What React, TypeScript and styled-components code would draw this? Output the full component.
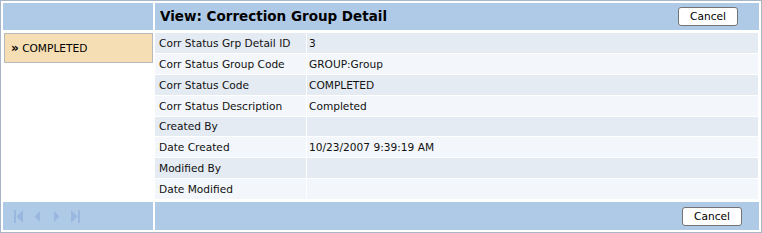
import React from 'react';
import styled, { createGlobalStyle } from 'styled-components';

const GlobalStyle = createGlobalStyle`
  html, body {
    margin: 0;
    padding: 0;
    background: #ffffff;
  }
  body {
    font-family: 'DejaVu Sans', Verdana, sans-serif;
    font-size: 10.6px;
    color: #000000;
  }
`;

const rows: [string, string][] = [
  ['Corr Status Grp Detail ID', '3'],
  ['Corr Status Group Code', 'GROUP:Group'],
  ['Corr Status Code', 'COMPLETED'],
  ['Corr Status Description', 'Completed'],
  ['Created By', ''],
  ['Date Created', '10/23/2007 9:39:19 AM'],
  ['Modified By', ''],
  ['Date Modified', ''],
];

const NavIcon: React.FC<{ kind: 'first' | 'prev' | 'next' | 'last' }> = ({ kind }) => {
  const fill = '#9ab8df';
  return (
    <svg width="10" height="13" viewBox="0 0 10 13">
      {kind === 'first' && (
        <>
          <rect x="0" y="0" width="2" height="13" fill={fill} />
          <path d="M9 0 L2.5 6.5 L9 13 Z" fill={fill} />
        </>
      )}
      {kind === 'prev' && <path d="M7 1 L1.5 6.5 L7 12 Z" fill={fill} />}
      {kind === 'next' && <path d="M2 1 L7.5 6.5 L2 12 Z" fill={fill} />}
      {kind === 'last' && (
        <>
          <path d="M0 0 L6.5 6.5 L0 13 Z" fill={fill} />
          <rect x="7" y="0" width="2" height="13" fill={fill} />
        </>
      )}
    </svg>
  );
};

const App: React.FC = () => {
  return (
    <>
      <GlobalStyle />
      <Frame>
        <Grid>
          <HeaderLeft />
          <HeaderRight>
            <Title>View: Correction Group Detail</Title>
            <CancelButton>Cancel</CancelButton>
          </HeaderRight>

          <ListCell>
            <ListItem>
              <Chevron>»</Chevron> COMPLETED
            </ListItem>
          </ListCell>
          <DetailCell>
            {rows.map(([label, value], i) => (
              <Row key={label} shade={i % 2 === 0}>
                <Label>{label}</Label>
                <Value>{value}</Value>
              </Row>
            ))}
          </DetailCell>

          <FooterLeft>
            <NavIcon kind="first" />
            <NavIcon kind="prev" />
            <NavIcon kind="next" />
            <NavIcon kind="last" />
          </FooterLeft>
          <FooterRight>
            <CancelButton>Cancel</CancelButton>
          </FooterRight>
        </Grid>
      </Frame>
    </>
  );
};

const Frame = styled.div`
  width: 762px;
  height: 233px;
  box-sizing: border-box;
  border: 1px solid #a9b6c8;
  padding: 2px;
  background: #ffffff;
`;

const Grid = styled.div`
  display: grid;
  grid-template-columns: 150px 1fr;
  grid-template-rows: 27px 168px 28px;
  column-gap: 2px;
  row-gap: 2px;
  height: 100%;
`;

const HeaderLeft = styled.div`
  background: #afcae7;
`;

const HeaderRight = styled.div`
  background: #afcae7;
  display: flex;
  align-items: center;
  justify-content: space-between;
  padding: 0 21px 0 5px;
`;

const Title = styled.div`
  font-weight: bold;
  font-size: 13.5px;
  color: #000000;
  margin-top: -2px;
`;

const CancelButton = styled.button`
  width: 60px;
  height: 19px;
  padding: 0;
  background: #ffffff;
  border: 1px solid #747474;
  border-radius: 3px;
  font-family: 'DejaVu Sans', Tahoma, sans-serif;
  font-size: 10.6px;
  color: #000000;
  line-height: 17px;
`;

const ListCell = styled.div`
  background: #ffffff;
  padding-top: 1px;
`;

const ListItem = styled.div`
  height: 30px;
  box-sizing: border-box;
  margin-left: 1px;
  border: 1px solid #b6b9bd;
  background: #f5deb3;
  display: flex;
  align-items: center;
  padding-left: 6px;
  color: #000000;
  white-space: pre;
`;

const Chevron = styled.span`
  font-weight: bold;
  font-size: 12px;
`;

const DetailCell = styled.div`
  display: flex;
  flex-direction: column;
  padding-top: 1px;
  padding-right: 1px;
`;

const Row = styled.div<{ shade: boolean }>`
  display: flex;
  height: 21px;
  box-sizing: border-box;
  border-bottom: 1px solid #ffffff;
  background: ${(p) => (p.shade ? '#e4ebf3' : '#f3f7fb')};
  align-items: center;
`;

const Label = styled.div`
  width: 152px;
  height: 100%;
  box-sizing: border-box;
  border-right: 1px solid #ffffff;
  padding-left: 4px;
  display: flex;
  align-items: center;
  color: #111111;
`;

const Value = styled.div`
  padding-left: 2px;
  color: #111111;
`;

const FooterLeft = styled.div`
  background: #afcae7;
  display: flex;
  align-items: center;
  gap: 9px;
  padding-left: 11px;
`;

const FooterRight = styled.div`
  background: #afcae7;
  display: flex;
  align-items: center;
  justify-content: flex-end;
  padding-right: 17px;
`;

export default App;
